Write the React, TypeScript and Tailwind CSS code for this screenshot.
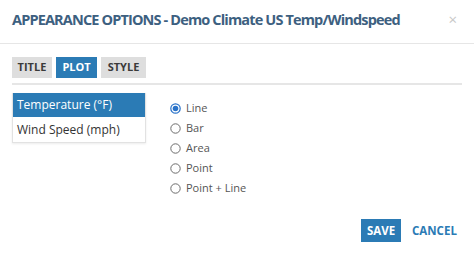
import React from "react";

const options = ["Line", "Bar", "Area", "Point", "Point + Line"];

function Radio({ checked }: { checked: boolean }) {
  return (
    <svg width="11" height="11" viewBox="0 0 11 11" className="shrink-0">
      {checked ? (
        <>
          <circle cx="5.5" cy="5.5" r="4.7" fill="none" stroke="#2a73c9" strokeWidth="1.2" />
          <circle cx="5.5" cy="5.5" r="2.8" fill="#2a73c9" />
        </>
      ) : (
        <circle cx="5.5" cy="5.5" r="4.7" fill="none" stroke="#6b6b6b" strokeWidth="1" />
      )}
    </svg>
  );
}

export default function App() {
  return (
    <div
      className="w-[474px] h-[254px] bg-white relative overflow-hidden"
      style={{ fontFamily: '"Open Sans", "Liberation Sans", sans-serif' }}
    >
      <div className="h-[44px] border-b border-[#e6e6e6] flex items-center px-3">
        <div className="text-[14.5px] font-bold text-[#3d6080] tracking-[-0.85px] leading-none pb-[2px] whitespace-nowrap">
          APPEARANCE OPTIONS - Demo Climate US Temp/Windspeed
        </div>
        <div className="ml-auto mr-[5px] text-[#c8c8c8] text-[15px] leading-none pb-[4px]">×</div>
      </div>

      <div className="mx-3 mt-[13px] flex gap-[4px]">
        <div className="w-[40px] h-[21px] bg-[#dedede] text-[#3a3a3a] text-[11px] font-bold flex items-center justify-center">TITLE</div>
        <div className="w-[41px] h-[21px] bg-[#2b7bb5] text-white text-[11px] font-bold flex items-center justify-center">PLOT</div>
        <div className="w-[45px] h-[21px] bg-[#dedede] text-[#3a3a3a] text-[11px] font-bold flex items-center justify-center">STYLE</div>
      </div>
      <div className="mx-3 mt-[5px] h-[2px] bg-[#e6e6e6]" />

      <div className="mx-3 mt-[8px] flex">
        <div className="w-[134px] h-[50px] border border-[#e2e2e2] border-t-0 shadow-[0_1px_2px_rgba(0,0,0,0.08)]">
          <div className="h-[24px] bg-[#2b7bb5] text-white text-[12px] flex items-center px-[4px]">Temperature (°F)</div>
          <div className="h-[25px] text-[#333] text-[12px] flex items-center px-[4px]">Wind Speed (mph)</div>
        </div>
        <div className="ml-[24px] mt-[5px] flex flex-col">
          {options.map((o, i) => (
            <div key={o} className="h-[20px] flex items-center gap-[5px] text-[11px] text-[#555]">
              <Radio checked={i === 0} />
              <span>{o}</span>
            </div>
          ))}
        </div>
      </div>

      <div className="absolute left-[361px] top-[219px] flex items-center">
        <div className="w-[40px] h-[23px] bg-[#2b7bb5] text-white text-[11.5px] font-bold flex items-center justify-center">SAVE</div>
        <div className="ml-[11px] text-[#2b7bb5] text-[11.5px] font-bold">CANCEL</div>
      </div>
    </div>
  );
}
